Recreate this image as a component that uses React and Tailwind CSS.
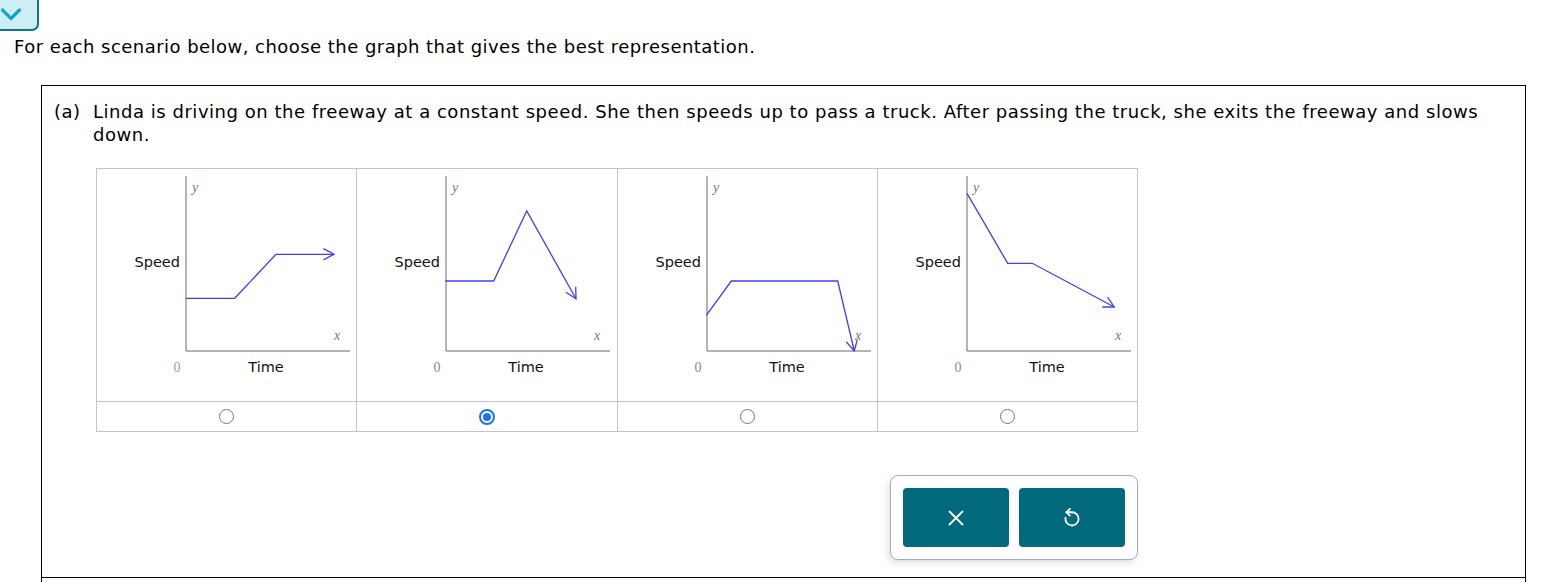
import React from "react";

const LINE = "#3f3ff5";

const graphs = [
  [[90, 130.3], [138.7, 130.3], [180, 86.3], [238, 86.3]],
  [[89.3, 113], [137.7, 113], [170.7, 43], [220, 130.7]],
  [[89.3, 147.3], [114.3, 113], [220.7, 113], [237.3, 183]],
  [[90, 25.3], [130.7, 95.3], [155.3, 95.3], [237.3, 139]],
];

function arrowHead(pts) {
  const [tx, ty] = pts[pts.length - 1];
  const [px, py] = pts[pts.length - 2];
  const a = Math.atan2(py - ty, px - tx);
  const L = 12;
  const d = (28 * Math.PI) / 180;
  const a1 = [tx + L * Math.cos(a + d), ty + L * Math.sin(a + d)];
  const a2 = [tx + L * Math.cos(a - d), ty + L * Math.sin(a - d)];
  return `M${a1[0]} ${a1[1]} L${tx} ${ty} L${a2[0]} ${a2[1]}`;
}

function Graph({ pts, zeroColor }) {
  const d = "M" + pts.map((p) => p.join(" ")).join(" L");
  return (
    <svg width="259" height="232" viewBox="1 1 259 232" className="block">
      <line x1="90" y1="8" x2="90" y2="183" stroke="#6b6b6b" strokeWidth="1" />
      <line x1="90" y1="183" x2="254" y2="183" stroke="#6b6b6b" strokeWidth="1" />
      <text x="99" y="24" fontFamily="'Liberation Serif', serif" fontStyle="italic" fontSize="14" fill="#777" textAnchor="middle">y</text>
      <text x="241" y="172" fontFamily="'Liberation Serif', serif" fontStyle="italic" fontSize="14" fill="#777" textAnchor="middle">x</text>
      <text x="81" y="204" fontFamily="'Liberation Serif', serif" fontSize="14" fill={zeroColor} textAnchor="middle">0</text>
      <text x="84" y="99" fontFamily="'DejaVu Sans', sans-serif" fontSize="14.5" fill="#111" textAnchor="end">Speed</text>
      <text x="170" y="204" fontFamily="'DejaVu Sans', sans-serif" fontSize="14.5" fill="#111" textAnchor="middle">Time</text>
      <path d={d} fill="none" stroke={LINE} strokeWidth="1.3" strokeLinejoin="miter" />
      <path d={arrowHead(pts)} fill="none" stroke={LINE} strokeWidth="1.3" />
    </svg>
  );
}

function Radio({ checked }) {
  if (checked) {
    return (
      <span className="flex h-[16px] w-[16px] items-center justify-center rounded-full border-2 border-[#1a73f0] bg-white">
        <span className="h-[8px] w-[8px] rounded-full bg-[#1a73f0]" />
      </span>
    );
  }
  return <span className="h-[15px] w-[15px] rounded-full border-[1.5px] border-[#767676] bg-white" />;
}

export default function App() {
  return (
    <div className="font-['DejaVu_Sans',Verdana,sans-serif] text-black bg-white w-[1557px] h-[582px] overflow-hidden">
      <div className="flex h-[31px] w-[39px] items-start rounded-br-[7px] border-b-2 border-r-2 border-[#137687] bg-[#cdeef4]">
        <svg width="24" height="22" viewBox="0 0 24 22" className="mt-[2px]">
          <polyline points="2.5,8 11,16.5 19.5,8" fill="none" stroke="#16a5c5" strokeWidth="3.2" strokeLinecap="round" strokeLinejoin="round" />
        </svg>
      </div>
      <p className="mt-[4px] pl-[14px] text-[18px] leading-[23px] tracking-[0.46px]">
        For each scenario below, choose the graph that gives the best representation.
      </p>
      <div className="ml-[41px] mt-[27px] w-[1485px] border-x border-t border-black">
        <div className="flex pl-[12px] pt-[14px] pb-[17px]">
          <div className="w-[39px] shrink-0 text-[18px] leading-[23px] tracking-[0.46px]">(a)</div>
          <div>
            <p className="whitespace-nowrap text-[18px] leading-[23px] tracking-[0.53px]">
              Linda is driving on the freeway at a constant speed. She then speeds up to pass a truck. After passing the truck, she exits the freeway and slows
              <br />
              down.
            </p>
            <div className="ml-[3px] mt-[22px] w-[1042px]">
              <div className="grid grid-cols-4 border-l border-t border-[#c4c4c4]">
                {graphs.map((g, i) => (
                  <div key={"g" + i} className="h-[233px] border-b border-r border-[#c4c4c4]">
                    <Graph pts={g} zeroColor={i === 0 ? "#8a9fc0" : "#8a8a8a"} />
                  </div>
                ))}
                {graphs.map((g, i) => (
                  <div key={"r" + i} className="flex h-[30px] items-center justify-center border-b border-r border-[#c4c4c4]">
                    <Radio checked={i === 1} />
                  </div>
                ))}
              </div>
              <div className="mt-[43px] flex justify-end">
                <div className="flex gap-[10px] rounded-[8px] border border-[#9fb0b6] bg-white p-[12px] shadow-[-2px_3px_6px_rgba(0,0,0,0.12)]">
                  <button className="flex h-[59px] w-[106px] items-center justify-center rounded-[4px] bg-[#03697c]">
                    <svg width="18" height="18" viewBox="0 0 18 18">
                      <path d="M2.5 2.5 L15.5 15.5 M15.5 2.5 L2.5 15.5" stroke="#fff" strokeWidth="1.8" strokeLinecap="round" />
                    </svg>
                  </button>
                  <button className="flex h-[59px] w-[106px] items-center justify-center rounded-[4px] bg-[#03697c]">
                    <svg width="18" height="21" viewBox="0 0 17 20">
                      <path d="M6.5 1.8 L3.2 5 L6.5 8.2" fill="none" stroke="#fff" strokeWidth="1.7" strokeLinecap="round" strokeLinejoin="round" />
                      <path d="M3.2 5 H8.5 A6.3 6.3 0 1 1 2.3 10.2" fill="none" stroke="#fff" strokeWidth="1.7" strokeLinecap="round" />
                    </svg>
                  </button>
                </div>
              </div>
            </div>
          </div>
        </div>
        <div className="border-b border-black" />
        <div className="h-[20px]" />
      </div>
    </div>
  );
}
